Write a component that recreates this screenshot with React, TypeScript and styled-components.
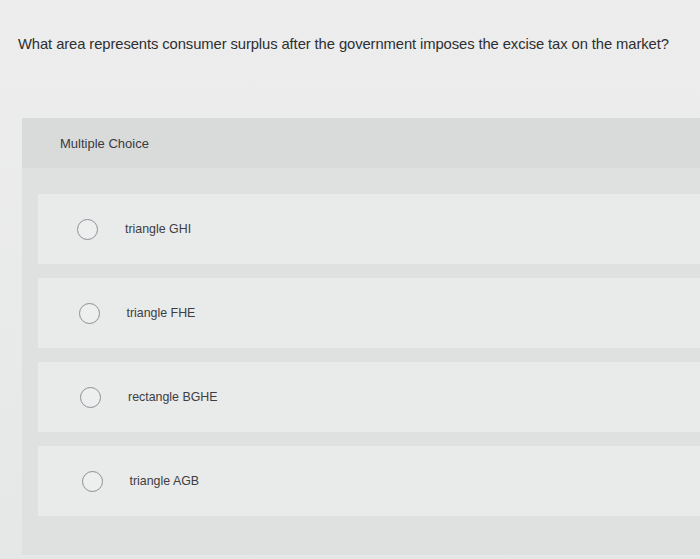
import React from "react";
import styled, { createGlobalStyle } from "styled-components";

const Global = createGlobalStyle`
  html, body { margin: 0; padding: 0; }
  body {
    background: #e9eaea;
    font-family: "Liberation Sans", Arial, sans-serif;
    width: 700px;
    height: 559px;
    overflow: hidden;
  }
`;

const Page = styled.div`
  display: flex;
  flex-direction: column;
  height: 559px;
  background: linear-gradient(#ecedec, #e6e7e7);
`;

const Question = styled.p`
  margin: 0;
  padding: 36px 0 0 18px;
  height: 118px;
  box-sizing: border-box;
  font-size: 14.8px;
  color: #2e2f31;
  letter-spacing: -0.1px;
`;

const Panel = styled.section`
  margin-left: 22px;
  height: 437px;
  background: #dfe0e0;
  display: flex;
  flex-direction: column;
`;

const Header = styled.div`
  height: 50px;
  background: #d9dada;
  display: flex;
  align-items: center;
  padding-left: 38px;
  font-size: 13px;
  color: #3a3b3e;
`;

const List = styled.div`
  display: flex;
  flex-direction: column;
  gap: 14px;
  padding: 26px 0 0 16px;
`;

const Option = styled.label<{ $shift: number }>`
  height: 70px;
  background: #e9eaea;
  display: flex;
  align-items: center;
  padding-left: ${(p) => 39 + p.$shift}px;
  gap: 27px;
  font-size: 12.4px;
  color: #3d3e42;
`;

const Radio = styled.span`
  width: 19px;
  height: 19px;
  border-radius: 50%;
  border: 1.5px solid #8d8f96;
  background: #edeeee;
  flex: none;
`;

const options = ["triangle GHI", "triangle FHE", "rectangle BGHE", "triangle AGB"];

export default function App() {
  return (
    <Page>
      <Global />
      <Question>
        What area represents consumer surplus after the government imposes the excise tax on the market?
      </Question>
      <Panel>
        <Header>Multiple Choice</Header>
        <List>
          {options.map((o, i) => (
            <Option key={o} $shift={i * 1.5}>
              <Radio />
              {o}
            </Option>
          ))}
        </List>
      </Panel>
    </Page>
  );
}
